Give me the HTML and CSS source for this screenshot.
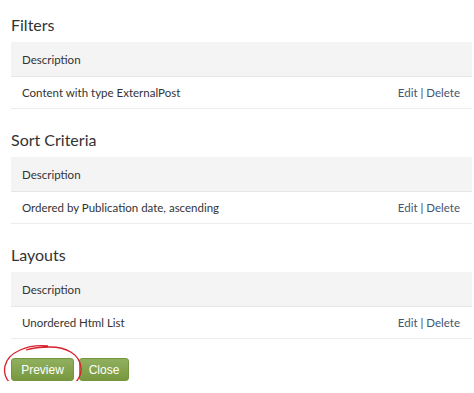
FILE: index.html
```html
<!DOCTYPE html>
<html lang="en">
<head>
    <meta charset="UTF-8">
    <title>Query Settings</title>
    <link rel="stylesheet" href="styles.css">
</head>
<body>
    <div class="page">
        <div class="section">
            <h2>Filters</h2>
            <table class="grid">
                <tr><th>Description</th><th></th></tr>
                <tr><td>Content with type ExternalPost</td><td class="actions"><a href="#">Edit</a> | <a href="#">Delete</a></td></tr>
            </table>
        </div>
        <div class="section">
            <h2>Sort Criteria</h2>
            <table class="grid">
                <tr><th>Description</th><th></th></tr>
                <tr><td>Ordered by Publication date, ascending</td><td class="actions"><a href="#">Edit</a> | <a href="#">Delete</a></td></tr>
            </table>
        </div>
        <div class="section">
            <h2>Layouts</h2>
            <table class="grid">
                <tr><th>Description</th><th></th></tr>
                <tr><td>Unordered Html List</td><td class="actions"><a href="#">Edit</a> | <a href="#">Delete</a></td></tr>
            </table>
        </div>
        <div class="buttons">
            <div class="circled">
                <button class="green-btn preview">Preview</button>
                <svg class="scribble" width="84" height="52" viewBox="0 0 84 52">
                    <path d="M46 2 C26 0 6 8 3 22 C0 37 14 49 40 49 C62 49 80 40 79 24 C78 10 64 3 48 3 C38 3 30 4 24 6" fill="none" stroke="#d8202a" stroke-width="1.3"/>
                </svg>
            </div>
            <button class="green-btn close">Close</button>
        </div>
    </div>
</body>
</html>
```

FILE: styles.css
```css
body { margin: 0; background: #fff; font-family: Lato, "Open Sans", sans-serif; color: #333; }
.page { padding: 9px 2px 0 11px; }
.section { margin-bottom: 15px; }
h2 { font-size: 16px; font-weight: 400; margin: 0; height: 33px; line-height: 32px; color: #333; }
.grid { width: 100%; border-collapse: collapse; font-size: 11.5px; }
.grid th { background: #f4f4f4; text-align: left; font-weight: 400; height: 34px; padding: 0 11px; border-bottom: 1px solid #e6e6e6; }
.grid td { height: 31px; padding: 0 12px 0 11px; border-bottom: 1px solid #ececec; }
.grid .actions { text-align: right; white-space: nowrap; }
.grid a { color: #3f5670; text-decoration: none; }
.buttons { display: flex; gap: 5px; margin-top: 19px; }
.circled { position: relative; display: flex; }
.green-btn { font-family: "Liberation Sans", Arial, sans-serif; font-size: 12px; color: #fff; background: linear-gradient(#90b060, #78983f); border: 1px solid #76953f; border-radius: 3px; height: 23px; padding: 0; }
.preview { width: 63px; }
.close { width: 50px; }
.scribble { position: absolute; left: -9px; top: -14px; pointer-events: none; }
```
